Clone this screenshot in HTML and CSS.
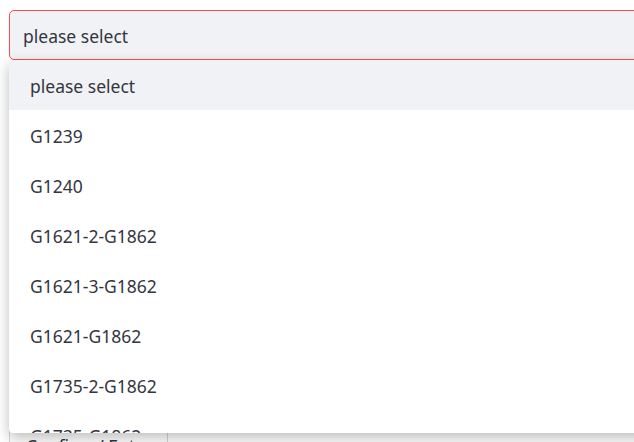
FILE: index.html
```html
<!DOCTYPE html>
<html>
<head>
<meta charset="utf-8">
<link rel="stylesheet" href="styles.css">
</head>
<body>
<div class="page">
  <div class="field">
    <div class="select">please select</div>
    <div class="spacer"></div>
    <button class="btn">Confirm / Enter</button>
    <ul class="menu">
      <li class="opt active">please select</li>
      <li class="opt">G1239</li>
      <li class="opt">G1240</li>
      <li class="opt">G1621-2-G1862</li>
      <li class="opt">G1621-3-G1862</li>
      <li class="opt">G1621-G1862</li>
      <li class="opt">G1735-2-G1862</li>
      <li class="opt">G1735-G1862</li>
    </ul>
  </div>
</div>
</body>
</html>
```
FILE: styles.css
```css
html, body {
  margin: 0;
  padding: 0;
  background: #ffffff;
  overflow: hidden;
  width: 634px;
  height: 442px;
}
.page {
  padding: 10px 0 0 9px;
  font-family: "Noto Sans", "Open Sans", sans-serif;
  color: #34363f;
}
.field {
  position: relative;
  margin-right: -40px;
}
.select {
  box-sizing: border-box;
  height: 50px;
  border: 1px solid #ff4b4b;
  border-radius: 5px;
  background: #f0f2f6;
  padding: 3px 0 0 13px;
  display: flex;
  align-items: center;
  font-size: 17.5px;
  line-height: 1;
}
.spacer {
  height: 361px;
}
.btn {
  display: block;
  box-sizing: border-box;
  margin: 0;
  width: 159px;
  height: 50px;
  padding: 0 0 0 16px;
  text-align: left;
  background: #ffffff;
  border: 1px solid rgba(49, 51, 63, 0.2);
  border-radius: 5px;
  font-family: inherit;
  font-size: 17.5px;
  color: #31333f;
}
.menu {
  position: absolute;
  top: 50px;
  left: 0;
  right: 0;
  height: 373px;
  margin: 0;
  padding: 0;
  list-style: none;
  background: #ffffff;
  overflow: hidden;
  border-radius: 0 0 4px 4px;
  box-shadow: 0 5px 14px rgba(0, 0, 0, 0.26);
}
.opt {
  box-sizing: border-box;
  height: 50px;
  display: flex;
  align-items: center;
  padding: 4px 0 0 21px;
  font-size: 17.5px;
  line-height: 1;
}
.opt.active {
  background: #f0f2f6;
}
```
